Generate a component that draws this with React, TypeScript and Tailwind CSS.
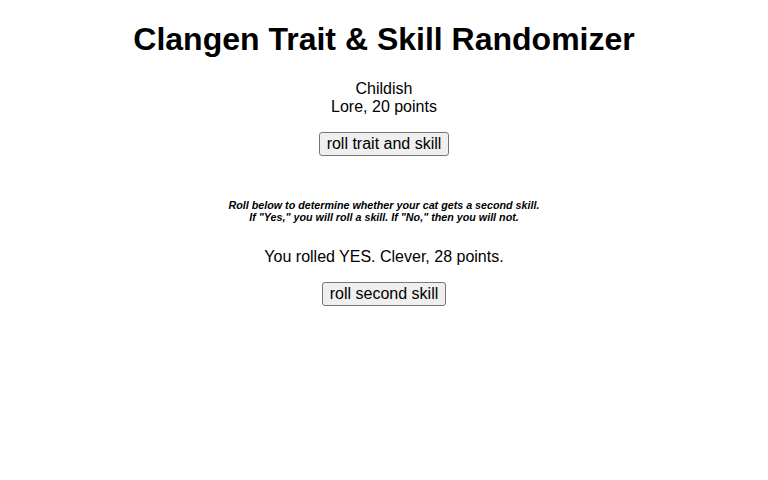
export default function App() {
  const btn =
    "h-[24px] rounded-[3px] border border-[#767676] bg-[#efefef] px-[7px] text-base leading-[18px] text-black";
  return (
    <div className="min-h-[480px] bg-white text-center text-black font-['Liberation_Sans',Arial,sans-serif]">
      <div className="h-[21px]" />
      <h1 className="text-[32px] font-bold leading-[37px]">Clangen Trait &amp; Skill Randomizer</h1>

      <div className="mt-[22px] text-base leading-[18px]">
        <div>Childish</div>
        <div>Lore, 20 points</div>
      </div>

      <div className="mt-[16px] flex justify-center">
        <button type="button" className={btn}>roll trait and skill</button>
      </div>

      <div className="mt-[43px] text-[10.72px] font-bold italic leading-[12px]">
        <div>Roll below to determine whether your cat gets a second skill.</div>
        <div>If "Yes," you will roll a skill. If "No," then you will not.</div>
      </div>

      <div className="mt-[25px] text-base leading-[18px]">You rolled YES. Clever, 28 points.</div>

      <div className="mt-[16px] flex justify-center">
        <button type="button" className={btn}>roll second skill</button>
      </div>
    </div>
  );
}
